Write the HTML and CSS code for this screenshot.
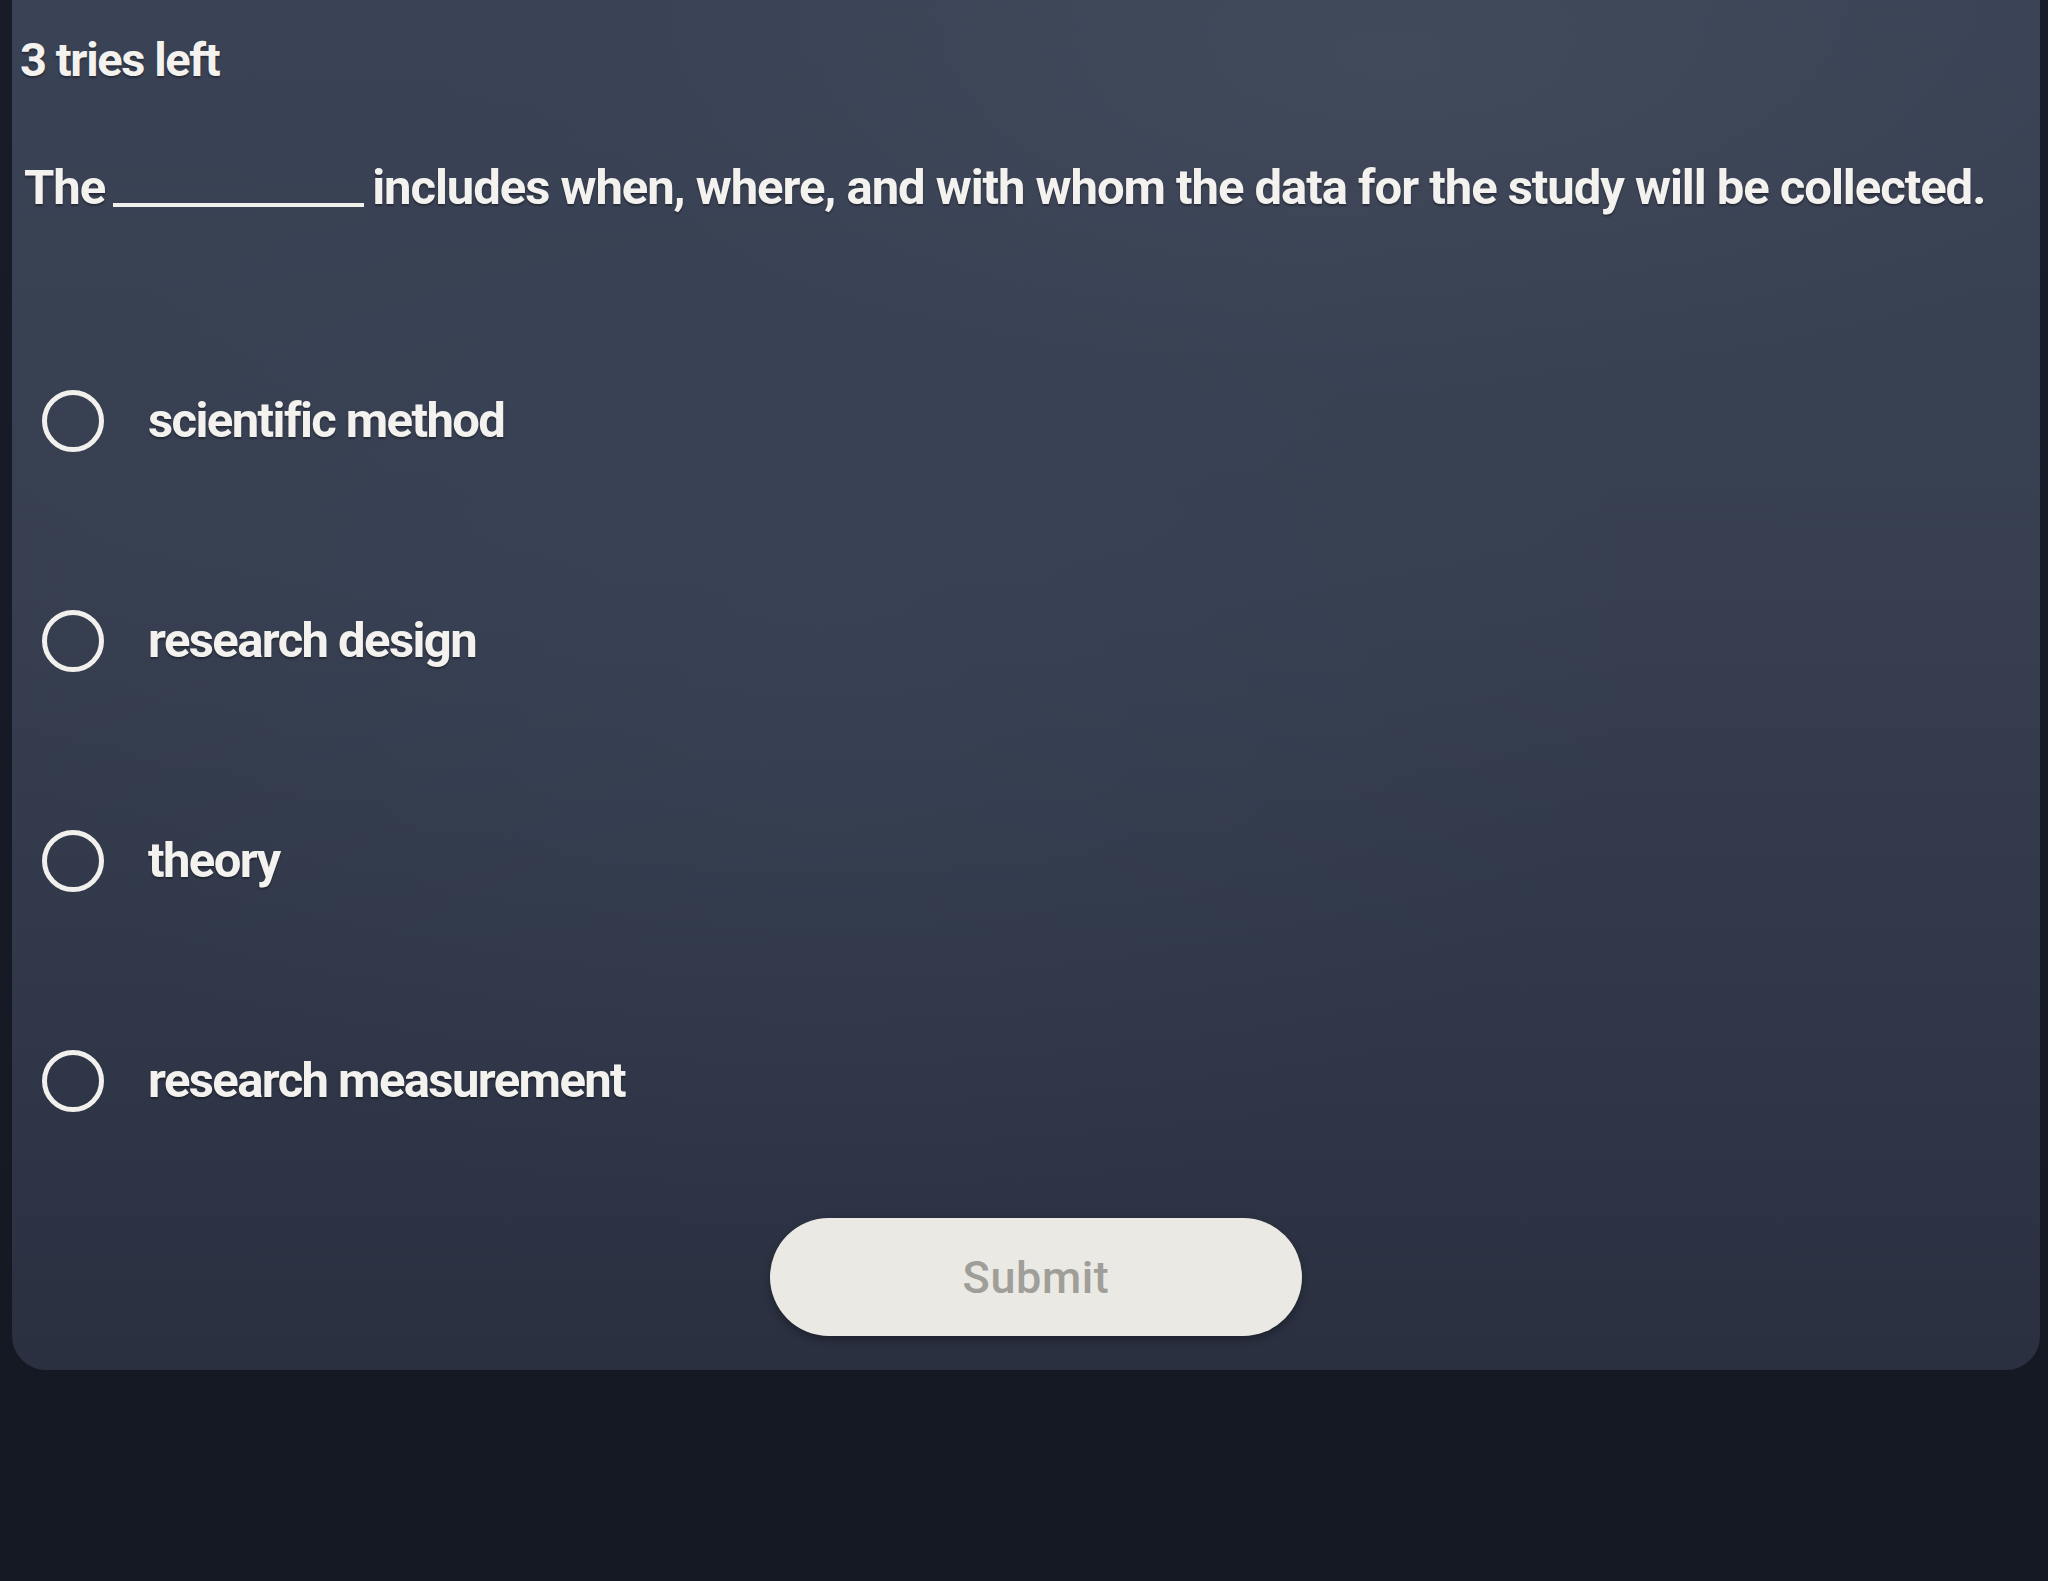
FILE: index.html
```html
<!DOCTYPE html>
<html lang="en">
<head>
<meta charset="utf-8">
<title>Question</title>
<link rel="stylesheet" href="styles.css">
</head>
<body>
<main class="card">
  <div class="tries">3 tries left</div>
  <p class="question">The<span class="blank"></span>includes when, where, and with whom the data for the study will be collected.</p>
  <ul class="options">
    <li class="option"><span class="radio"></span><span class="label">scientific method</span></li>
    <li class="option"><span class="radio"></span><span class="label">research design</span></li>
    <li class="option"><span class="radio"></span><span class="label">theory</span></li>
    <li class="option"><span class="radio"></span><span class="label">research measurement</span></li>
  </ul>
  <div class="actions">
    <button class="submit" type="button">Submit</button>
  </div>
</main>
</body>
</html>
```
FILE: styles.css
```css
html, body {
  margin: 0;
  padding: 0;
}
body {
  width: 2048px;
  height: 1581px;
  overflow: hidden;
  background: linear-gradient(180deg, #171c28 0%, #131823 100%);
  font-family: Roboto, "Liberation Sans", Arial, sans-serif;
  color: #f4f2ee;
}
.card {
  margin: 0 8px 0 12px;
  padding: 32px 0 34px 8px;
  border-radius: 0 0 34px 34px;
  background:
    radial-gradient(ellipse 40% 25% at 68% 4%, rgba(90, 98, 114, 0.22), rgba(90, 98, 114, 0) 100%),
    radial-gradient(ellipse 40% 45% at 40% 45%, rgba(66, 78, 100, 0.22), rgba(66, 78, 100, 0) 100%),
    linear-gradient(180deg, #3a4255 0%, #373f51 40%, #31384a 70%, #2a3040 100%);
}
.tries {
  font-size: 47px;
  line-height: 56px;
  font-weight: 700;
  letter-spacing: -1.4px;
  text-shadow: 0 2px 2px rgba(0, 0, 0, 0.35);
}
.question {
  margin: 70px 0 0 4px;
  font-size: 49px;
  line-height: 60px;
  font-weight: 700;
  letter-spacing: -1.05px;
  white-space: nowrap;
  text-shadow: 0 2px 2px rgba(0, 0, 0, 0.35);
}
.blank {
  display: inline-block;
  width: 251px;
  height: 0;
  margin: 0 8px;
  border-bottom: 4px solid #f2f0ec;
  vertical-align: -3px;
}
.options {
  list-style: none;
  margin: 172px 0 0 22px;
  padding: 0;
  display: flex;
  flex-direction: column;
  gap: 158px;
}
.option {
  display: flex;
  align-items: center;
  gap: 44px;
}
.radio {
  width: 62px;
  height: 62px;
  box-sizing: border-box;
  border: 5px solid #f2f0ec;
  border-radius: 50%;
  flex: none;
}
.label {
  font-size: 49px;
  line-height: 60px;
  font-weight: 700;
  letter-spacing: -1.6px;
  text-shadow: 0 2px 2px rgba(0, 0, 0, 0.35);
}
.actions {
  margin-top: 106px;
  display: flex;
  justify-content: center;
  padding-left: 12px;
}
.submit {
  width: 532px;
  height: 118px;
  border: none;
  border-radius: 59px;
  background: #ebe9e4;
  color: #a09e99;
  font-family: Roboto, "Liberation Sans", Arial, sans-serif;
  font-size: 45px;
  font-weight: 500;
  letter-spacing: 0.6px;
  padding: 0;
  box-shadow: 0 4px 8px rgba(0, 0, 0, 0.3);
}
```
